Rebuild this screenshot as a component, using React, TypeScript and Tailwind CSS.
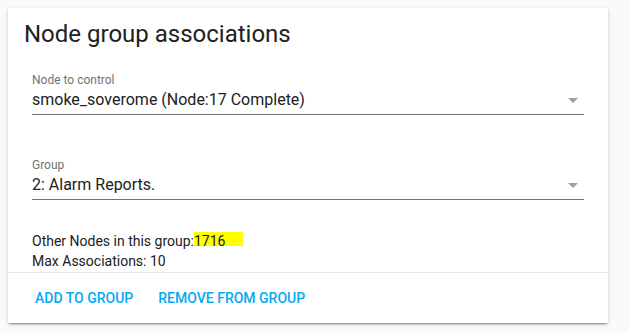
export default function App() {
  return (
    <div className="min-h-[333px] w-[629px] bg-[#fafafa] p-2 font-['Roboto','Liberation_Sans',sans-serif]">
      <div className="w-[600px] rounded-[2px] bg-white shadow-[0_2px_2px_0_rgba(0,0,0,0.14),0_1px_5px_0_rgba(0,0,0,0.12),0_3px_1px_-2px_rgba(0,0,0,0.2)]">
        <div className="px-4 pt-[10px]">
          <h1 className="text-[24px] leading-[32px] text-[#212121]">Node group associations</h1>
        </div>

        <div className="px-6">
          <DropdownField
            className="mt-[22px]"
            label="Node to control"
            value="smoke_soverome (Node:17 Complete)"
          />
          <DropdownField className="mt-[42px]" label="Group" value="2: Alarm Reports." />

          <div className="mt-[31px] text-[14px] leading-[20px] text-[#212121]">
            <p>
              Other Nodes in this group:
              <span className="inline-block h-[14px] w-[49px] bg-[#ffff00] align-baseline leading-[18.4px]">
                1716
              </span>
            </p>
            <p>Max Associations: 10</p>
          </div>
        </div>

        {/* card actions */}
        <div className="mt-px flex h-[51px] items-center gap-[9px] border-t border-[#e8e8e8] px-[19px]">
          <ActionButton label="Add to group" />
          <ActionButton label="Remove from group" />
        </div>
      </div>
    </div>
  )
}

function DropdownField({ label, value, className }: { label: string; value: string; className?: string }) {
  return (
    <div className={className}>
      <p className="text-[12px] leading-[16px] text-[#737373]">{label}</p>
      <div className="border-b border-[#737373] pb-[2px]">
        <div className="flex h-[24px] items-center justify-between">
          <span className="text-[16px] leading-[24px] text-[#212121]">{value}</span>
          <span
            aria-hidden="true"
            className="mr-[6px] h-0 w-0 border-x-[5px] border-t-[5px] border-x-transparent border-t-[#9e9e9e]"
          />
        </div>
      </div>
    </div>
  )
}

function ActionButton({ label }: { label: string }) {
  return (
    <button className="rounded-[3px] px-[8px] py-[8px] text-[14px] font-medium uppercase leading-[20px] text-[#03a9f4]">
      {label}
    </button>
  )
}
